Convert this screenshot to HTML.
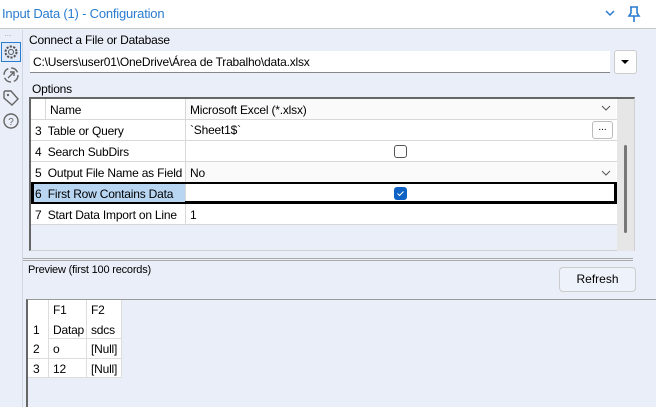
<!DOCTYPE html>
<html><head><style>
*{margin:0;padding:0;box-sizing:border-box}
body{width:656px;height:407px;overflow:hidden;background:#e9eef8;font-family:"Liberation Sans",sans-serif;font-size:12px;color:#000;position:relative}
.a{position:absolute}
.t{white-space:nowrap;letter-spacing:-0.2px}
</style></head><body>
<div class="a" style="left:0;top:0;width:656px;height:29px;background:#fff;border-bottom:1px solid #c8c8c8"></div>
<div class="a t" style="left:2px;top:6px;font-size:13px;color:#2a7cd0">Input Data (1) - Configuration</div>
<svg class="a" style="left:604px;top:9px" width="12" height="8"><path d="M2 2l4 4 4-4" stroke="#2a7cd0" stroke-width="1.5" fill="none"/></svg>
<svg class="a" style="left:626px;top:5px" width="16" height="18"><path d="M4 2h8M5 2v6l-2 3h10l-2-3V2M8 11v6" stroke="#2a7cd0" stroke-width="1.6" fill="none"/></svg>
<div class="a" style="left:22px;top:30px;width:1px;height:377px;background:#d0d6e2"></div>
<div class="a t" style="left:4px;top:31px;font-size:8px;color:#999">···</div>
<div class="a" style="left:1px;top:42px;width:20px;height:20px;border:1px solid #2a7cd0;background:#e0e9f8"></div>
<svg class="a" style="left:3px;top:44px" width="16" height="16"><circle cx="8" cy="8" r="2.5" stroke="#555" fill="none"/><circle cx="8" cy="8" r="5.5" stroke="#555" stroke-dasharray="2.2 1.3" stroke-width="2" fill="none"/></svg>
<svg class="a" style="left:2px;top:66px" width="18" height="18"><circle cx="9" cy="9" r="7" stroke="#666" stroke-width="1.4" stroke-dasharray="8 3" fill="none"/><path d="M6 12l6-6M8 6h4v4" stroke="#666" stroke-width="1.4" fill="none"/></svg>
<svg class="a" style="left:2px;top:89px" width="18" height="18"><path d="M2 3v6l8 7 6-6-7-8H3z" stroke="#666" stroke-width="1.4" fill="none"/><circle cx="6" cy="6" r="1.2" fill="#666"/></svg>
<svg class="a" style="left:2px;top:112px" width="18" height="18"><circle cx="9" cy="9" r="7" stroke="#666" stroke-width="1.4" fill="none"/><text x="9" y="13" font-size="10" text-anchor="middle" fill="#666" font-family="Liberation Sans">?</text></svg>

<div class="a t" style="left:29px;top:33px">Connect a File or Database</div>
<div class="a" style="left:30px;top:51px;width:580px;height:22px;background:#fff;border-bottom:1px solid #888"></div>
<div class="a t" style="left:33px;top:55px">C:\Users\user01\OneDrive\Área de Trabalho\data.xlsx</div>
<div class="a" style="left:614px;top:50px;width:23px;height:24px;background:#fdfdfd;border:1px solid #ccc;border-radius:3px"></div>
<div class="a" style="left:621px;top:60px;width:0;height:0;border-left:4px solid transparent;border-right:4px solid transparent;border-top:4px solid #000"></div>
<div class="a t" style="left:32px;top:82px">Options</div>

<div class="a" style="left:29px;top:97px;width:606px;height:154px;border:1px solid #d0d0d0;border-top:2px solid #666;border-left:2px solid #666"></div>
<div class="a" style="left:617px;top:99px;width:17px;height:152px;background:#e6e6e6"></div>
<div class="a" style="left:624px;top:145px;width:3px;height:88px;background:#777;border-radius:2px"></div>
<div class="a" style="left:31px;top:99px;width:586px;height:126px;background:#fff"></div>
<div class="a" style="left:31px;top:119px;width:586px;height:1px;background:#d8d8d8"></div>
<div class="a" style="left:31px;top:140px;width:586px;height:1px;background:#d8d8d8"></div>
<div class="a" style="left:31px;top:161px;width:586px;height:1px;background:#d8d8d8"></div>
<div class="a" style="left:31px;top:224px;width:586px;height:1px;background:#d8d8d8"></div>
<div class="a" style="left:45px;top:99px;width:1px;height:20px;background:#d8d8d8"></div>
<div class="a" style="left:185px;top:99px;width:1px;height:126px;background:#d8d8d8"></div>
<div class="a" style="left:186px;top:99px;width:430px;height:20px;background:#fafafa"></div>
<div class="a" style="left:186px;top:162px;width:430px;height:20px;background:#fafafa"></div>
<div class="a" style="left:31px;top:182px;width:586px;height:22px;border:3px solid #000;border-top-width:2px"></div>
<div class="a" style="left:34px;top:184px;width:151px;height:18px;background:#b8d6f2"></div>
<div class="a t" style="left:50px;top:103px">Name</div>
<div class="a t" style="left:190px;top:103px">Microsoft Excel (*.xlsx)</div>
<svg class="a" style="left:601px;top:105px" width="10" height="7"><path d="M1 1l4 4 4-4" stroke="#555" fill="none"/></svg>
<div class="a t" style="left:35px;top:124px">3&nbsp;&nbsp;Table or Query</div>
<div class="a t" style="left:190px;top:123px">`Sheet1$`</div>
<div class="a" style="left:592px;top:121px;width:21px;height:18px;border:1px solid #bbb;border-radius:3px;background:#fdfdfd;font-size:10px;text-align:center;line-height:12px">...</div>
<div class="a t" style="left:35px;top:145px">4&nbsp;&nbsp;Search SubDirs</div>
<div class="a" style="left:394px;top:145px;width:13px;height:13px;border:1px solid #555;border-radius:3px;background:#fff"></div>
<div class="a t" style="left:35px;top:166px">5&nbsp;&nbsp;Output File Name as Field</div>
<div class="a t" style="left:190px;top:166px">No</div>
<svg class="a" style="left:601px;top:170px" width="10" height="7"><path d="M1 1l4 4 4-4" stroke="#555" fill="none"/></svg>
<div class="a t" style="left:35px;top:187px">6&nbsp;&nbsp;First Row Contains Data</div>
<div class="a" style="left:394px;top:187px;width:13px;height:13px;border-radius:3px;background:#0e62c4"></div>
<svg class="a" style="left:394px;top:187px" width="13" height="13"><path d="M3.5 6.5l2 2 4-4" stroke="#fff" stroke-width="1" fill="none"/></svg>
<div class="a t" style="left:35px;top:208px">7&nbsp;&nbsp;Start Data Import on Line</div>
<div class="a t" style="left:190px;top:208px">1</div>

<div class="a" style="left:23px;top:258px;width:610px;height:1px;background:#aaa"></div>
<div class="a" style="left:23px;top:260px;width:610px;height:1px;background:#aaa"></div>
<div class="a t" style="left:28px;top:264px;font-size:11px">Preview (first 100 records)</div>
<div class="a" style="left:559px;top:267px;width:77px;height:25px;border:1px solid #ccc;border-radius:4px;background:#eef2fa;text-align:center;line-height:23px">Refresh</div>
<div class="a" style="left:26px;top:299px;width:630px;height:108px;border-top:1px solid #999;border-left:2px solid #666"></div>
<div class="a" style="left:28px;top:300px;width:94px;height:77px;background:#fff"></div>
<div class="a" style="left:48px;top:300px;width:1px;height:77px;background:#ddd"></div>
<div class="a" style="left:86px;top:300px;width:1px;height:77px;background:#ddd"></div>
<div class="a" style="left:121px;top:300px;width:1px;height:77px;background:#ddd"></div>
<div class="a" style="left:48px;top:338px;width:74px;height:1px;background:#ddd"></div>
<div class="a" style="left:28px;top:358px;width:94px;height:1px;background:#ddd"></div>
<div class="a" style="left:28px;top:377px;width:94px;height:1px;background:#ddd"></div>
<div class="a t" style="left:53px;top:303px">F1</div><div class="a t" style="left:91px;top:303px">F2</div>
<div class="a t" style="left:33px;top:323px">1</div><div class="a t" style="left:53px;top:323px">Datap</div><div class="a t" style="left:91px;top:323px">sdcs</div>
<div class="a t" style="left:33px;top:342px">2</div><div class="a t" style="left:53px;top:342px">o</div><div class="a t" style="left:91px;top:342px">[Null]</div>
<div class="a t" style="left:33px;top:362px">3</div><div class="a t" style="left:53px;top:362px">12</div><div class="a t" style="left:91px;top:362px">[Null]</div>
</body></html>
